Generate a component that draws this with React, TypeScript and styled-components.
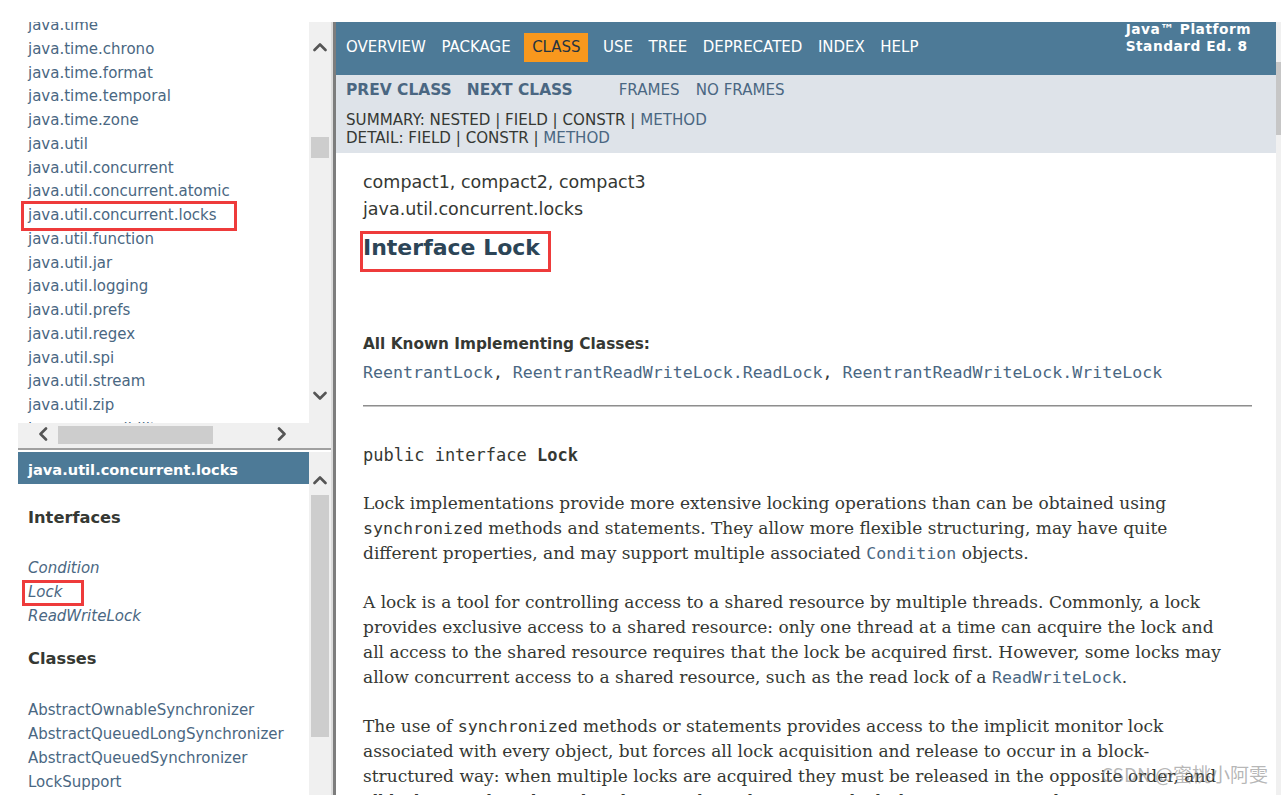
import React from "react";
import styled, { createGlobalStyle, css } from "styled-components";

const C = {
  nav: "#4d7a97",
  sub: "#dee3e9",
  active: "#f8981d",
  link: "#4a6782",
  text: "#353833",
  title: "#2c4557",
  track: "#f0f0f0",
  thumb: "#cdcdcd",
  arrow: "#555",
  red: "#ee3b3b",
};

const GlobalStyle = createGlobalStyle`
  html, body { margin: 0; padding: 0; background: #fff; }
  body { font-family: "DejaVu Sans", "Liberation Sans", sans-serif; color: ${C.text}; }
  * { box-sizing: border-box; }
`;

const Page = styled.div`
  position: relative;
  display: flex;
  width: 1281px;
  height: 795px;
  padding: 22px 0 0 18px;
  overflow: hidden;
  background: #fff;
`;

/* ---------- left frame ---------- */
const LeftFrame = styled.div`
  width: 313px;
  display: flex;
  flex-direction: column;
  flex-shrink: 0;
`;

const UpperPane = styled.div`
  display: grid;
  flex-shrink: 0;
  grid-template-columns: 291px 22px;
  grid-template-rows: 401px 24px;
`;

const ListArea = styled.div`
  overflow: hidden;
  background: #fff;
  padding-left: 10px;
`;

const PackageList = styled.ul`
  list-style: none;
  margin: -8px 0 0;
  padding: 0;
`;

const PackageItem = styled.li`
  font-size: 15px;
  line-height: 23.75px;
  color: ${C.link};
  white-space: nowrap;
`;

const Highlight = styled.span<{ $t: number; $r: number; $b: number; $l: number }>`
  position: relative;
  display: inline-block;
  &::after {
    content: "";
    position: absolute;
    top: ${(p) => p.$t}px;
    right: ${(p) => p.$r}px;
    bottom: ${(p) => p.$b}px;
    left: ${(p) => p.$l}px;
    border: 3px solid ${C.red};
    pointer-events: none;
  }
`;

const VScroll = styled.div<{ $top: number }>`
  display: flex;
  flex-direction: column;
  align-items: center;
  background: ${C.track};
  padding-top: ${(p) => p.$top}px;
`;

const VThumb = styled.div<{ $gap: number; $h: number }>`
  width: 18px;
  flex-shrink: 0;
  height: ${(p) => p.$h}px;
  margin-top: ${(p) => p.$gap}px;
  background: ${C.thumb};
`;

const BottomArrow = styled.div`
  margin-top: auto;
  margin-bottom: 22px;
  display: flex;
`;

const HScroll = styled.div`
  display: flex;
  align-items: center;
  background: ${C.track};
  padding: 0 22px 2px 20px;
`;

const HThumb = styled.div`
  width: 155px;
  height: 18px;
  margin: 2px 0 0 10px;
  background: ${C.thumb};
`;

const RightArrow = styled.div`
  margin-left: auto;
  display: flex;
`;

const Corner = styled.div`
  background: ${C.track};
`;

const Splitter = styled.div`
  height: 5px;
  flex-shrink: 0;
  border-top: 1px solid ${C.track};
  border-bottom: 2px solid #fff;
  background: #a0a0a0;
`;

const LowerPane = styled.div`
  flex: 1;
  display: grid;
  grid-template-columns: 291px 22px;
  min-height: 0;
`;

const ClassArea = styled.div`
  display: flex;
  flex-direction: column;
  overflow: hidden;
`;

const FrameHeader = styled.div`
  height: 32px;
  flex-shrink: 0;
  display: flex;
  align-items: center;
  padding: 2px 0 0 10px;
  background: ${C.nav};
  color: #fff;
  font-weight: bold;
  font-size: 14.6px;
  white-space: nowrap;
`;

const ClassBody = styled.div`
  flex-shrink: 0;
  padding: 1px 0 0 10px;
`;

const SectionHeading = styled.div<{ $top: number }>`
  margin-top: ${(p) => p.$top}px;
  font-weight: bold;
  font-size: 16.25px;
  line-height: 22px;
  color: ${C.text};
`;

const ClassList = styled.ul<{ $top: number }>`
  list-style: none;
  margin: ${(p) => p.$top}px 0 0;
  padding: 0;
`;

const ClassItem = styled.li<{ $italic?: boolean }>`
  font-size: 15px;
  line-height: 24px;
  color: ${C.link};
  white-space: nowrap;
  ${(p) =>
    p.$italic &&
    css`
      font-style: italic;
    `}
`;

const FrameDivider = styled.div`
  width: 5px;
  flex-shrink: 0;
  border-left: 2px solid #dcdcdc;
  background: #7d7d7d;
`;

/* ---------- right frame ---------- */
const RightFrame = styled.div`
  display: flex;
  width: 945px;
  flex-shrink: 0;
`;

const Main = styled.div`
  width: 940px;
  display: flex;
  flex-direction: column;
  overflow: hidden;
`;

const TopNav = styled.div`
  height: 53px;
  flex-shrink: 0;
  display: flex;
  align-items: center;
  gap: 15.5px;
  padding: 0 0 2px 10px;
  background: ${C.nav};
  font-size: 15px;
  color: #fff;
  white-space: nowrap;
`;

const NavItem = styled.span<{ $active?: boolean }>`
  line-height: 29px;
  ${(p) =>
    p.$active &&
    css`
      background: ${C.active};
      color: #253441;
      padding: 0 7px 0 8px;
      margin-left: -2px;
    `}
`;

const AboutLanguage = styled.div`
  margin-left: auto;
  align-self: flex-start;
  margin-top: -1px;
  padding-right: 25px;
  font-size: 13.75px;
  line-height: 17px;
  font-weight: bold;
  letter-spacing: 0.5px;
`;

const SubNav = styled.div`
  height: 78px;
  flex-shrink: 0;
  padding: 5px 10px 0;
  background: ${C.sub};
  font-size: 15.1px;
  white-space: nowrap;
`;

const SubRow = styled.div<{ $top?: number }>`
  display: flex;
  align-items: center;
  line-height: 20px;
  margin-top: ${(p) => p.$top ?? 0}px;
`;

const SubLink = styled.span<{ $bold?: boolean; $gap?: number }>`
  color: ${C.link};
  margin-right: ${(p) => p.$gap ?? 16}px;
  ${(p) =>
    p.$bold &&
    css`
      font-weight: bold;
      font-size: 15.45px;
    `}
`;

const DetailLine = styled.div`
  line-height: 18px;
  color: ${C.text};
`;

const Dim = styled.span`
  color: ${C.link};
`;

const Content = styled.div`
  flex-shrink: 0;
  padding: 15.5px 24px 0 27px;
  color: ${C.text};
`;

const MetaLine = styled.div`
  font-size: 17.5px;
  line-height: 27px;
`;

const Title = styled.h2`
  margin: 10px 0 0;
  font-size: 22px;
  line-height: 30px;
  font-weight: bold;
  color: ${C.title};
`;

const DefTerm = styled.div`
  margin-top: 71px;
  font-size: 15.3px;
  line-height: 20px;
  font-weight: bold;
`;

const Mono = styled.span<{ $link?: boolean; $size?: number }>`
  font-family: "DejaVu Sans Mono", "Liberation Mono", monospace;
  font-size: ${(p) => p.$size ?? 16.6}px;
  color: ${(p) => (p.$link ? C.link : C.text)};
`;

const ImplLine = styled.div`
  margin-top: 8px;
  line-height: 22px;
  white-space: nowrap;
`;

const Rule = styled.hr`
  margin: 21.5px 0 0;
  height: 2px;
  border: 0;
  border-top: 1px solid #8e8e8e;
  border-bottom: 1px solid #c4c4c4;
`;

const Signature = styled.pre`
  margin: 37px 0 0;
  line-height: 22px;
  font-family: "DejaVu Sans Mono", "Liberation Mono", monospace;
  font-size: 17px;
  color: ${C.text};
`;

const Para = styled.p<{ $top: number }>`
  margin: ${(p) => p.$top}px 0 0;
  font-family: "DejaVu Serif", "Liberation Serif", serif;
  font-size: 17px;
  line-height: 25px;
  white-space: nowrap;
`;

const RightScroll = styled.div`
  width: 5px;
  background: ${C.track};
`;

const RightThumb = styled.div`
  margin-top: 40px;
  height: 73px;
  background: #c6c6c6;
`;

const Watermark = styled.div`
  position: absolute;
  right: 13px;
  bottom: 8px;
  font-family: "Noto Sans CJK SC", "Noto Sans", sans-serif;
  font-size: 19px;
  color: rgba(120, 120, 120, 0.55);
  white-space: nowrap;
`;

/* ---------- icons ---------- */
const Chevron = ({ dir }: { dir: "up" | "down" | "left" | "right" }) => {
  const horizontal = dir === "up" || dir === "down";
  const w = horizontal ? 14 : 10;
  const h = horizontal ? 10 : 14;
  const pts =
    dir === "up"
      ? "1.5,8 7,2.5 12.5,8"
      : dir === "down"
      ? "1.5,2 7,7.5 12.5,2"
      : dir === "left"
      ? "8,1.5 2.5,7 8,12.5"
      : "2,1.5 7.5,7 2,12.5";
  return (
    <svg width={w} height={h} viewBox={`0 0 ${w} ${h}`} style={{ display: "block" }}>
      <polyline points={pts} fill="none" stroke={C.arrow} strokeWidth={2.6} strokeLinecap="round" strokeLinejoin="round" />
    </svg>
  );
};

const packages = [
  "java.time",
  "java.time.chrono",
  "java.time.format",
  "java.time.temporal",
  "java.time.zone",
  "java.util",
  "java.util.concurrent",
  "java.util.concurrent.atomic",
  "java.util.concurrent.locks",
  "java.util.function",
  "java.util.jar",
  "java.util.logging",
  "java.util.prefs",
  "java.util.regex",
  "java.util.spi",
  "java.util.stream",
  "java.util.zip",
  "javax.accessibility",
];

const interfaces = ["Condition", "Lock", "ReadWriteLock"];
const classes = [
  "AbstractOwnableSynchronizer",
  "AbstractQueuedLongSynchronizer",
  "AbstractQueuedSynchronizer",
  "LockSupport",
];
const navItems = ["OVERVIEW", "PACKAGE", "CLASS", "USE", "TREE", "DEPRECATED", "INDEX", "HELP"];

export default function App() {
  return (
    <>
      <GlobalStyle />
      <Page>
        <LeftFrame>
          <UpperPane>
            <ListArea>
              <PackageList>
                {packages.map((p) => (
                  <PackageItem key={p}>
                    {p === "java.util.concurrent.locks" ? (
                      <Highlight $t={-3} $r={-20} $b={-3} $l={-7}>
                        {p}
                      </Highlight>
                    ) : (
                      p
                    )}
                  </PackageItem>
                ))}
              </PackageList>
            </ListArea>
            <VScroll $top={20}>
              <Chevron dir="up" />
              <VThumb $gap={85} $h={21} />
              <BottomArrow>
                <Chevron dir="down" />
              </BottomArrow>
            </VScroll>
            <HScroll>
              <Chevron dir="left" />
              <HThumb />
              <RightArrow>
                <Chevron dir="right" />
              </RightArrow>
            </HScroll>
            <Corner />
          </UpperPane>
          <Splitter />
          <LowerPane>
            <ClassArea>
              <FrameHeader>java.util.concurrent.locks</FrameHeader>
              <ClassBody>
                <SectionHeading $top={22}>Interfaces</SectionHeading>
                <ClassList $top={27}>
                  {interfaces.map((i) => (
                    <ClassItem key={i} $italic>
                      {i === "Lock" ? (
                        <Highlight $t={0} $r={-22} $b={-2} $l={-6}>
                          {i}
                        </Highlight>
                      ) : (
                        i
                      )}
                    </ClassItem>
                  ))}
                </ClassList>
                <SectionHeading $top={20}>Classes</SectionHeading>
                <ClassList $top={28}>
                  {classes.map((c) => (
                    <ClassItem key={c}>{c}</ClassItem>
                  ))}
                </ClassList>
              </ClassBody>
            </ClassArea>
            <VScroll $top={23}>
              <Chevron dir="up" />
              <VThumb $gap={10} $h={242} />
            </VScroll>
          </LowerPane>
        </LeftFrame>
        <FrameDivider />
        <RightFrame>
          <Main>
            <TopNav>
              {navItems.map((n) => (
                <NavItem key={n} $active={n === "CLASS"}>
                  {n}
                </NavItem>
              ))}
              <AboutLanguage>
                Java™ Platform
                <br />
                Standard Ed. 8
              </AboutLanguage>
            </TopNav>
            <SubNav>
              <SubRow>
                <SubLink $bold $gap={15}>
                  PREV CLASS
                </SubLink>
                <SubLink $bold $gap={46}>
                  NEXT CLASS
                </SubLink>
                <SubLink>FRAMES</SubLink>
                <SubLink>NO FRAMES</SubLink>
              </SubRow>
              <SubRow $top={11}>
                <DetailLine>
                  SUMMARY: NESTED | FIELD | CONSTR | <Dim>METHOD</Dim>
                  <br />
                  DETAIL: FIELD | CONSTR | <Dim>METHOD</Dim>
                </DetailLine>
              </SubRow>
            </SubNav>
            <Content>
              <MetaLine>compact1, compact2, compact3</MetaLine>
              <MetaLine>java.util.concurrent.locks</MetaLine>
              <Title>
                <Highlight $t={-2} $r={-11} $b={-9} $l={-3}>
                  Interface Lock
                </Highlight>
              </Title>
              <DefTerm>All Known Implementing Classes:</DefTerm>
              <ImplLine>
                <Mono $link>ReentrantLock</Mono>
                <Mono>, </Mono>
                <Mono $link>ReentrantReadWriteLock.ReadLock</Mono>
                <Mono>, </Mono>
                <Mono $link>ReentrantReadWriteLock.WriteLock</Mono>
              </ImplLine>
              <Rule />
              <Signature>
                public interface <b>Lock</b>
              </Signature>
              <Para $top={24.5}>
                Lock implementations provide more extensive locking operations than can be obtained using
                <br />
                <Mono>synchronized</Mono> methods and statements. They allow more flexible structuring, may have quite
                <br />
                different properties, and may support multiple associated <Mono $link>Condition</Mono> objects.
              </Para>
              <Para $top={24}>
                A lock is a tool for controlling access to a shared resource by multiple threads. Commonly, a lock
                <br />
                provides exclusive access to a shared resource: only one thread at a time can acquire the lock and
                <br />
                all access to the shared resource requires that the lock be acquired first. However, some locks may
                <br />
                allow concurrent access to a shared resource, such as the read lock of a <Mono $link>ReadWriteLock</Mono>.
              </Para>
              <Para $top={24}>
                The use of <Mono>synchronized</Mono> methods or statements provides access to the implicit monitor lock
                <br />
                associated with every object, but forces all lock acquisition and release to occur in a block-
                <br />
                structured way: when multiple locks are acquired they must be released in the opposite order, and
                <br />
                all locks must be released in the same lexical scope in which they were acquired.
              </Para>
            </Content>
          </Main>
          <RightScroll>
            <RightThumb />
          </RightScroll>
        </RightFrame>
        <Watermark>CSDN @蜜桃小阿雯</Watermark>
      </Page>
    </>
  );
}
